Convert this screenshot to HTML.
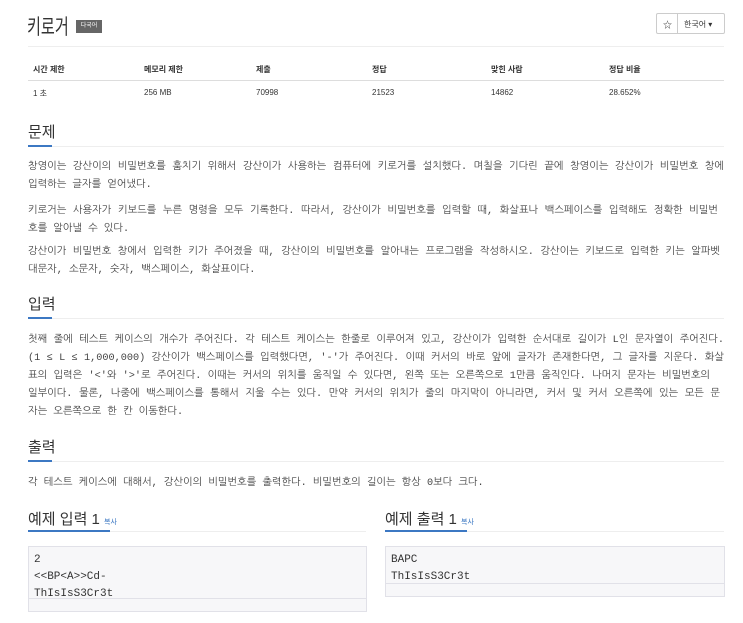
<!DOCTYPE html>
<html><head><meta charset="utf-8"><style>
*{margin:0;padding:0;box-sizing:border-box}
body{width:743px;height:623px;background:#fff;font-family:"Liberation Sans","Noto Sans CJK KR",sans-serif;color:#333;position:relative;overflow:hidden}
.abs{position:absolute}
.t{font-family:"Liberation Mono","NanumGothic","Noto Sans CJK KR",monospace;font-size:10.2px;color:#444;left:28px;width:696px;height:18px;line-height:18px;white-space:nowrap;overflow:visible}
.j{text-align:justify;text-align-last:justify;white-space:normal}
h3{position:absolute;left:28px;font-weight:normal;font-size:15px;color:#333}
.ul{position:absolute;height:1px;background:#eee}
.bl{position:absolute;height:2px;background:#3c78c3}
.th{font-size:8px;font-weight:bold;color:#333;top:64px}
.td{font-size:8px;color:#333;top:88px}
.box{position:absolute;background:#f7f7f9;border:1px solid #e1e1e8;font-family:"Liberation Mono",monospace;font-size:11px;color:#333;line-height:17px;padding:5px 5px}
.box .bot{position:absolute;left:0;right:0;bottom:0;height:13px;border-top:1px solid #e1e1e8}
</style></head><body>
<div class="abs" style="left:27px;top:11px;font-size:21px;color:#333;transform:scaleX(0.72);transform-origin:0 0;white-space:nowrap">키로거</div>
<div class="abs" style="left:76px;top:20px;width:26px;height:13px;background:#666;color:#fff;font-size:6px;line-height:13px;text-align:center">다국어</div>
<div class="abs" style="left:656px;top:13px;width:69px;height:21px;border:1px solid #ccc;border-radius:2px;font-size:8px;color:#333"><span class="abs" style="left:6px;top:4px;font-size:9px">☆</span><span class="abs" style="left:20px;top:0;width:1px;height:19px;background:#ccc"></span><span class="abs" style="left:27px;top:5px">한국어 ▾</span></div>
<div class="ul" style="left:28px;width:696px;top:46px"></div>
<div class="abs th" style="left:33px">시간 제한</div>
<div class="abs th" style="left:144px">메모리 제한</div>
<div class="abs th" style="left:256px">제출</div>
<div class="abs th" style="left:372px">정답</div>
<div class="abs th" style="left:491px">맞힌 사람</div>
<div class="abs th" style="left:609px">정답 비율</div>
<div class="ul" style="left:28px;width:696px;top:80px;background:#ddd"></div>
<div class="abs td" style="left:33px">1 초</div>
<div class="abs td" style="left:144px">256 MB</div>
<div class="abs td" style="left:256px">70998</div>
<div class="abs td" style="left:372px">21523</div>
<div class="abs td" style="left:491px">14862</div>
<div class="abs td" style="left:609px">28.652%</div>

<h3 style="top:121px">문제</h3>
<div class="ul" style="left:28px;width:696px;top:146px"></div><div class="bl" style="left:28px;width:24px;top:145px"></div>
<div class="abs t j" style="top:159px">창영이는 강산이의 비밀번호를 훔치기 위해서 강산이가 사용하는 컴퓨터에 키로거를 설치했다. 며칠을 기다린 끝에 창영이는 강산이가 비밀번호 창에</div>
<div class="abs t" style="top:177px">입력하는 글자를 얻어냈다.</div>
<div class="abs t j" style="top:203px;width:690px">키로거는 사용자가 키보드를 누른 명령을 모두 기록한다. 따라서, 강산이가 비밀번호를 입력할 때, 화살표나 백스페이스를 입력해도 정확한 비밀번</div>
<div class="abs t" style="top:221px">호를 알아낼 수 있다.</div>
<div class="abs t j" style="top:244px;width:692px">강산이가 비밀번호 창에서 입력한 키가 주어졌을 때, 강산이의 비밀번호를 알아내는 프로그램을 작성하시오. 강산이는 키보드로 입력한 키는 알파벳</div>
<div class="abs t" style="top:262px">대문자, 소문자, 숫자, 백스페이스, 화살표이다.</div>

<h3 style="top:293px">입력</h3>
<div class="ul" style="left:28px;width:696px;top:318px"></div><div class="bl" style="left:28px;width:24px;top:317px"></div>
<div class="abs t j" style="top:332px">첫째 줄에 테스트 케이스의 개수가 주어진다. 각 테스트 케이스는 한줄로 이루어져 있고, 강산이가 입력한 순서대로 길이가 L인 문자열이 주어진다.</div>
<div class="abs t j" style="top:350px">(1 ≤ L ≤ 1,000,000) 강산이가 백스페이스를 입력했다면, '-'가 주어진다. 이때 커서의 바로 앞에 글자가 존재한다면, 그 글자를 지운다. 화살</div>
<div class="abs t j" style="top:368px;width:682px">표의 입력은 '&lt;'와 '&gt;'로 주어진다. 이때는 커서의 위치를 움직일 수 있다면, 왼쪽 또는 오른쪽으로 1만큼 움직인다. 나머지 문자는 비밀번호의</div>
<div class="abs t j" style="top:386px;width:692px">일부이다. 물론, 나중에 백스페이스를 통해서 지울 수는 있다. 만약 커서의 위치가 줄의 마지막이 아니라면, 커서 및 커서 오른쪽에 있는 모든 문</div>
<div class="abs t" style="top:404px">자는 오른쪽으로 한 칸 이동한다.</div>

<h3 style="top:436px">출력</h3>
<div class="ul" style="left:28px;width:696px;top:461px"></div><div class="bl" style="left:28px;width:24px;top:460px"></div>
<div class="abs t" style="top:475px">각 테스트 케이스에 대해서, 강산이의 비밀번호를 출력한다. 비밀번호의 길이는 항상 0보다 크다.</div>

<h3 style="top:508px">예제 입력 1 <span style="font-size:7px;color:#3c78c3">복사</span></h3>
<div class="ul" style="left:28px;width:338px;top:531px"></div><div class="bl" style="left:28px;width:82px;top:530px"></div>
<h3 style="top:508px;left:385px">예제 출력 1 <span style="font-size:7px;color:#3c78c3">복사</span></h3>
<div class="ul" style="left:385px;width:339px;top:531px"></div><div class="bl" style="left:385px;width:82px;top:530px"></div>
<div class="box" style="left:28px;top:546px;width:339px;height:66px">2<br>&lt;&lt;BP&lt;A&gt;&gt;Cd-<br>ThIsIsS3Cr3t<div class="bot"></div></div>
<div class="box" style="left:385px;top:546px;width:340px;height:51px">BAPC<br>ThIsIsS3Cr3t<div class="bot"></div></div>
</body></html>
